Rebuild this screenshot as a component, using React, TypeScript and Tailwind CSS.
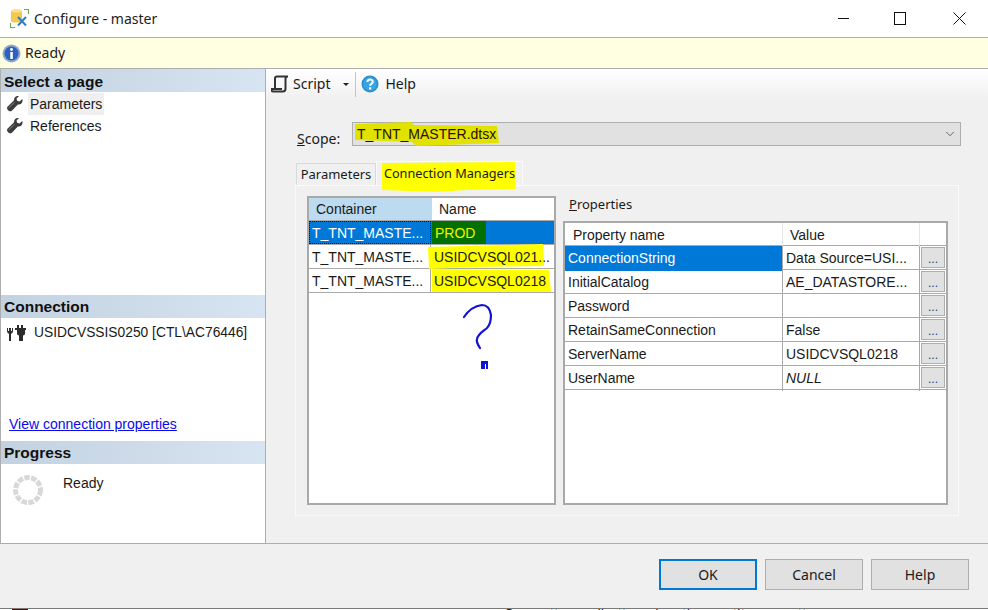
import type { ReactNode } from "react";
import { ChevronDown } from "lucide-react";

const FONT = "font-['Noto_Sans','Open_Sans',sans-serif]";
const SANS = "font-['Liberation_Sans',sans-serif]";

function Wrench() {
  return (
    <svg width="18" height="18" viewBox="0 0 19 19" className="shrink-0">
      <path
        d="M12.500 1c-2.500 0-4.300 2-4 4.600L1.800 12.100c-1 1-.9 2.400 0 3.400l1 1c1 1 2.400 1 3.400 0l6.300-6.500c2.800.4 5-1.500 5-4.200 0-.6-.1-1.100-.3-1.600l-2.900 2.600-2.600-.7-.6-2.500 2.700-2.600C14 1.200 13.300 1 12.500 1Z"
        fill="#3c3c3c"
      />
      <path d="M3 13.500 9 7.500" stroke="#8a8a8a" strokeWidth="1" />
    </svg>
  );
}

function PlugIcon() {
  return (
    <svg width="20" height="17" viewBox="0 0 20 17" className="shrink-0">
      <path d="M0 3v3c0 1.500 1 2.500 2 2.700V16h2V8.700C5 8.500 6 7.500 6 6V3H5v3H4V3H2v3H1V3Z" fill="#2b2b2b" />
      <path d="M10 0h2v3h2V0h2v3h3v2h-1v3.500c0 1-1 2-2 2V16h-4v-5.500c-1 0-2-1-2-2V5H8V3h2Z" fill="#2b2b2b" />
    </svg>
  );
}

function SectionHeader({ children, leading = "leading-[24px]" }: { children: ReactNode; leading?: string }) {
  return (
    <div className={`h-[23px] shrink-0 bg-gradient-to-r from-[#c3d2e1] to-[#d7e4f1] pl-[3px] ${SANS} text-[15.500px] ${leading} font-bold text-[#111]`}>
      {children}
    </div>
  );
}

function PageItem({ label, active }: { label: string; active?: boolean }) {
  return (
    <div className="flex h-[22px] items-center pl-[5px]">
      <Wrench />
      <span className={`ml-[4px] px-[2px] ${SANS} text-[14px] leading-[22px] text-[#1a1a1a] ${active ? "bg-[#efefef]" : ""}`}>
        {label}
      </span>
    </div>
  );
}

function Spinner() {
  return (
    <svg width="32" height="32" viewBox="0 0 32 32" className="shrink-0">
      <circle cx="16" cy="16" r="12.500" fill="none" stroke="#d8d8d8" strokeWidth="5" strokeDasharray="5.500 1.350" />
    </svg>
  );
}

function Toolbar() {
  return (
    <div className="flex h-[31px] shrink-0 items-center bg-gradient-to-b from-white to-[#f0f0f0] pl-[5px] text-[14px] text-[#1a1a1a]">
      <svg width="18" height="18" viewBox="0 0 18 18" className="-mt-px shrink-0">
        <path
          d="M6 1.500h11M6 1.500c-1.500 0-2 1-2 2v10.500M17 1.500c-1.500 0-2.500 1-2.500 2v10c0 1.500-1 3-2.500 3H2c-1 0-1.500-1-1.500-2.500H11"
          fill="none"
          stroke="#333"
          strokeWidth="2"
        />
      </svg>
      <span className="-mt-[2px] ml-[4px]">Script</span>
      <span className="ml-[13px] h-0 w-0 border-x-[3px] border-t-[3px] border-x-transparent border-t-[#222]" />
      <span className="ml-[6px] h-[25px] w-px bg-[#c4c4c4]" />
      <svg width="18" height="18" viewBox="0 0 18 18" className="-mt-px ml-[5px] shrink-0">
        <circle cx="9" cy="9" r="8.500" fill="#2a8fd0" />
        <circle cx="9" cy="9" r="6.700" fill="#3aa3e3" />
        <path d="M6.400 7c0-3.300 5.400-3.300 5.400-.2 0 2-2.700 2-2.700 4" fill="none" stroke="#fff" strokeWidth="1.900" />
        <rect x="8" y="12.300" width="2.200" height="2.200" fill="#fff" />
      </svg>
      <span className="-mt-[2px] ml-[6px]">Help</span>
    </div>
  );
}

function Scope() {
  return (
    <div className="flex items-center pl-[31px]">
      <span className="mt-[9px] w-[55px] text-[14px] text-[#1a1a1a]">
        <span className="underline">S</span>cope:
      </span>
      <div className={`relative flex h-[24px] w-[609px] items-center border border-[#adadad] bg-[#e1e1e1] pl-[4px] ${SANS} text-[14px] text-[#2a0f00]`}>
        <svg width="146" height="26" viewBox="0 0 146 26" className="absolute top-[-2px] left-0">
          <path d="M2 3 58 1l3 3 83 1 2 17-83 3-4-4L2 19Z" fill="#e2e200" />
        </svg>
        <span className="relative">T_TNT_MASTER.dtsx</span>
        <ChevronDown size={14} strokeWidth={1.200} className="absolute right-[3px] text-[#333]" />
      </div>
    </div>
  );
}

function Tabs() {
  return (
    <div className="mt-[12px] ml-[30px] flex h-[24px] items-end text-[13px] text-[#1a1a1a]">
      <div className="flex h-[22px] w-[80px] items-center justify-center border border-b-0 border-[#d9d9d9] bg-[#f0f0f0]">
        Parameters
      </div>
      <div className="relative flex h-[24px] w-[147px] items-center justify-center border border-b-0 border-[#fafafa] bg-[#f0f0f0]">
        <svg width="136" height="30" viewBox="0 0 136 30" className="absolute top-0 left-[4px]">
          <path d="M1 1 134 0l1 27-50 1-30 2-54-2Z" fill="#ffff00" />
        </svg>
        <span className="relative text-[12.700px]">Connection Managers</span>
      </div>
    </div>
  );
}

const containers = ["T_TNT_MASTE...", "T_TNT_MASTE...", "T_TNT_MASTE..."];

function ManagersGrid() {
  return (
    <div className={`relative h-[309px] w-[249px] shrink-0 border-2 border-[#a9a9a9] bg-white ${SANS} text-[14px] leading-[25px] text-[#1a1a1a]`}>
      <div className="flex h-[23px] border-b border-[#a9a9a9] leading-[22px]">
        <div className="w-[123px] bg-[#bcdaf0] pl-[7px]">Container</div>
        <div className="pl-[7px]">Name</div>
      </div>
      <div className="flex h-[24px] border-b border-[#a9a9a9] bg-[#0078d7] text-white">
        <div className="w-[122px] border border-dotted border-[#111] pl-[2px] leading-[23px]">{containers[0]}</div>
        <div className="ml-px w-[54px] bg-[#007000] pl-[3px] text-[#f2f200]">PROD</div>
      </div>
      <div className="relative flex h-[24px] border-b border-[#a9a9a9]">
        <div className="w-[122px] border-r border-[#a9a9a9] pl-[3px]">{containers[1]}</div>
        <div className="relative pl-[3px]">
          <svg width="120" height="26" viewBox="0 0 120 26" className="absolute top-[-1px] left-[-3px]">
            <path d="M0 3 115 0l1 22-70 1-45 2Z" fill="#ffff00" />
          </svg>
          <span className="relative">USIDCVSQL021...</span>
        </div>
      </div>
      <div className="relative flex h-[24px] border-b border-[#a9a9a9]">
        <div className="w-[122px] border-r border-[#a9a9a9] pl-[3px]">{containers[2]}</div>
        <div className="relative pl-[3px]">
          <svg width="122" height="24" viewBox="0 0 122 24" className="absolute top-0 left-0">
            <path d="M1 0 118 1l2 22H1Z" fill="#ffff00" />
          </svg>
          <span className="relative">USIDCVSQL0218</span>
        </div>
      </div>
      {/* hand-drawn question mark on the screenshot */}
      <svg width="40" height="80" viewBox="0 0 40 80" className="absolute top-[102px] left-[152px]">
        <path
          d="M3 17C7 11 13 6 21 5c6 0 8 4 9 10 0 6-1 10-4 13-5 4-9 6-10 11-1 3 1 6 3 9"
          fill="none"
          stroke="#1212d6"
          strokeWidth="2.200"
          strokeLinecap="round"
        />
        <path d="M20 61h7v8h-2v-5h-1v5h-4Z" fill="#1212d6" />
      </svg>
    </div>
  );
}

const props: { name: string; value: string; selected?: boolean; italic?: boolean }[] = [
  { name: "ConnectionString", value: "Data Source=USI...", selected: true },
  { name: "InitialCatalog", value: "AE_DATASTORE..." },
  { name: "Password", value: "" },
  { name: "RetainSameConnection", value: "False" },
  { name: "ServerName", value: "USIDCVSQL0218" },
  { name: "UserName", value: "NULL", italic: true },
];

function PropertiesGrid() {
  return (
    <div className="flex min-w-0 flex-1 flex-col">
      <div className="h-[25px] pl-[6px] text-[13px] leading-[16px] text-[#1a1a1a]">
        <span className="underline">P</span>roperties
      </div>
      <div className={`h-[284px] w-[385px] border-2 border-[#a9a9a9] bg-white ${SANS} text-[14px] leading-[25px] text-[#1a1a1a]`}>
        <div className="grid h-[23px] grid-cols-[218px_137px_26px] border-b border-[#a9a9a9]">
          <div className="border-r border-[#e6e6e6] pl-[8px]">Property name</div>
          <div className="border-r border-[#e6e6e6] pl-[7px]">Value</div>
          <div />
        </div>
        {props.map((p) => (
          <div key={p.name} className="grid h-[24px] grid-cols-[218px_137px_26px] border-b border-[#a9a9a9]">
            <div className={`border-r border-[#a9a9a9] pl-[3px] ${p.selected ? "bg-[#0078d7] text-white" : ""}`}>
              {p.name}
            </div>
            <div className={`truncate border-r border-[#a9a9a9] pl-[3px] ${p.italic ? "italic" : ""}`}>{p.value}</div>
            <div className="py-px pl-px">
              <div className="flex h-[21px] w-[24px] items-end justify-center border border-[#adadad] bg-[#e1e1e1] text-[12px] leading-[16px] text-[#0b3f7a]">
                ...
              </div>
            </div>
          </div>
        ))}
      </div>
    </div>
  );
}

function FooterButton({ label, primary }: { label: string; primary?: boolean }) {
  return (
    <button
      className={`h-[31px] w-[98px] bg-[#e1e1e1] text-[14px] text-[#1a1a1a] ${
        primary ? "border-2 border-[#0078d7]" : "border border-[#adadad]"
      }`}
    >
      {label}
    </button>
  );
}

export default function App() {
  return (
    <div className={`flex h-[610px] w-[988px] flex-col overflow-hidden bg-[#f0f0f0] ${FONT}`}>
      <div className="flex h-[37px] shrink-0 items-center bg-white pl-[10px]">
        <svg width="19" height="19" viewBox="0 0 19 19" className="shrink-0">
          <path d="M1 2c0-2 11-2 11 0v10c0 2-11 2-11 0Z" fill="#f2c94c" />
          <ellipse cx="6.500" cy="2" rx="5.500" ry="1.500" fill="#f8e08a" />
          <path d="M14 .5h4.500V5M.5 14v4.500H5" fill="none" stroke="#63b04a" strokeWidth="1.200" />
          <path d="m8 8 8 8.500M16 8l-8 8.500" stroke="#2f7fc4" strokeWidth="2" />
        </svg>
        <span className="ml-[5px] text-[14px] text-[#222]">Configure - master</span>
        <svg width="128" height="14" viewBox="0 0 128 14" className="mr-[22px] ml-auto shrink-0">
          <path d="M0 6.500h11" stroke="#111" strokeWidth="1" />
          <rect x="56.500" y=".5" width="11" height="12" fill="none" stroke="#111" strokeWidth="1" />
          <path d="m115.500.5 12 12M127.500.5l-12 12" stroke="#111" strokeWidth="1" />
        </svg>
      </div>

      <div className="flex h-[32px] shrink-0 items-center border-y border-[#adadad] bg-[#ffffe1] pl-[2px] text-[14px] text-[#1a1a1a]">
        <svg width="19" height="19" viewBox="0 0 19 19" className="shrink-0">
          <circle cx="9.500" cy="9.500" r="9" fill="#8fa6cf" />
          <circle cx="9.500" cy="9.500" r="7" fill="#2c62bc" />
          <circle cx="9.500" cy="5.500" r="1.400" fill="#fff" />
          <rect x="8.300" y="8" width="2.500" height="7" fill="#fff" />
        </svg>
        <span className="-mt-px ml-[4px]">Ready</span>
      </div>

      <div className="flex min-h-0 flex-1 border-b border-[#adadad]">
        <div className="flex w-[266px] shrink-0 flex-col border-x border-[#adadad] bg-white">
          <SectionHeader leading="leading-[25px]">Select a page</SectionHeader>
          <div className="flex-1 pt-px">
            <PageItem label="Parameters" active />
            <PageItem label="References" />
          </div>
          <SectionHeader>Connection</SectionHeader>
          <div className={`flex h-[123px] shrink-0 flex-col pt-[5px] ${SANS} text-[14px]`}>
            <div className="flex items-center pl-[6px] text-[#1a1a1a]">
              <PlugIcon />
              <span className="ml-[7px] text-[13.800px]">USIDCVSSIS0250 [CTL\AC76446]</span>
            </div>
            <a className="mt-auto mb-[6px] ml-[8px] text-[#0a0aee] underline">View connection properties</a>
          </div>
          <SectionHeader>Progress</SectionHeader>
          <div className="flex h-[79px] shrink-0 items-start pt-[10px] pl-[11px]">
            <Spinner />
            <span className={`-mt-px ml-[19px] ${SANS} text-[14px] text-[#1a1a1a]`}>Ready</span>
          </div>
        </div>

        <div className="flex min-w-0 flex-1 flex-col">
          <Toolbar />
          <div className="pt-[19px]">
            <Scope />
            <Tabs />
            <div className="ml-[29px] flex h-[331px] w-[664px] gap-[7px] border border-[#fafafa] pt-[10px] pl-[11px]">
              <ManagersGrid />
              <PropertiesGrid />
            </div>
          </div>
        </div>
      </div>

      <div className="flex h-[64px] shrink-0 items-start justify-end gap-[8px] pt-[15px] pr-[19px]">
        <FooterButton label="OK" primary />
        <FooterButton label="Cancel" />
        <FooterButton label="Help" />
      </div>

      <div className="relative h-[2px] shrink-0 overflow-hidden border-t border-[#7a7a7a] bg-white">
        <div className="absolute top-0 left-[12px] h-[2px] w-[16px] bg-[#6b0000]" />
        <span className="absolute top-[-3px] left-[504px] text-[13px] leading-[15px] whitespace-nowrap text-[#111]">
          Connections collection when the specific connection
        </span>
      </div>
    </div>
  );
}
